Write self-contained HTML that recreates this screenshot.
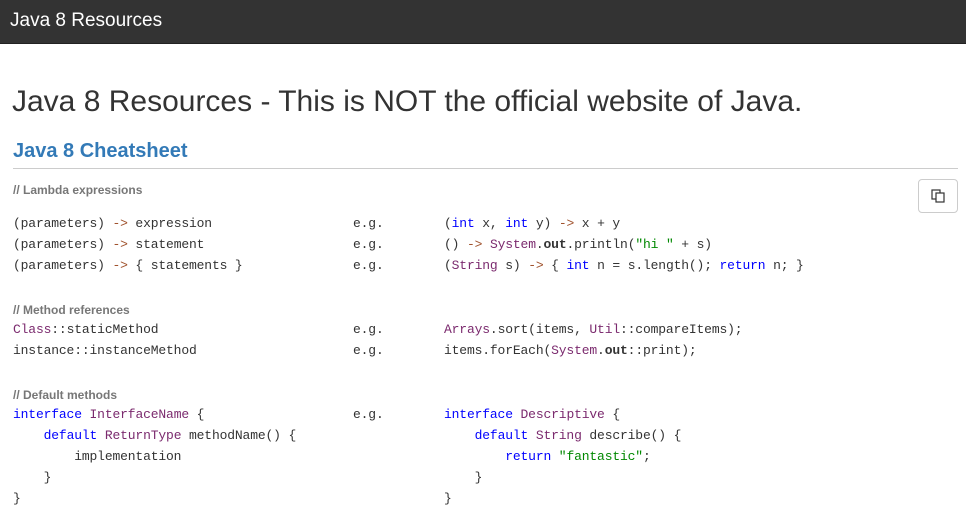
<!DOCTYPE html>
<html><head><meta charset="utf-8"><style>
body{margin:0;background:#fff;font-family:"Liberation Sans",sans-serif;color:#333;width:966px;height:515px;overflow:hidden;position:relative}
.nav{position:absolute;left:0;top:0;width:966px;height:43px;background:#333;border-bottom:1px solid #222}
.nav span{position:absolute;left:10px;top:10px;color:#fff;font-size:19px}
h1{position:absolute;left:12px;top:85px;margin:0;font-size:30px;font-weight:normal;color:#333;white-space:nowrap}
h2{position:absolute;left:13px;top:140px;margin:0;font-size:20px;font-weight:bold;color:#337ab7}
.hr{position:absolute;left:13px;top:168px;width:945px;height:1px;background:#ccc}
.btn{position:absolute;left:918px;top:179px;width:38px;height:32px;border:1px solid #ccc;border-radius:4px;background:#fff}
.c{position:absolute;left:13px;font-size:12px;font-weight:bold;color:#777}
.l{position:absolute;font-family:"Liberation Mono",monospace;font-size:13px;letter-spacing:-0.15px;white-space:pre;color:#333;line-height:16px}
.k{color:#00f}.t{color:#7b2a6e}.o{color:#a0522d}.s{color:#080}.b{font-weight:bold}
</style></head><body>
<div class="nav"><span>Java 8 Resources</span></div>
<h1>Java 8 Resources - This is NOT the official website of Java.</h1>
<h2>Java 8 Cheatsheet</h2>
<div class="hr"></div>
<div class="btn"><svg width="38" height="32" viewBox="0 0 38 32"><rect x="13" y="10" width="8" height="9" fill="none" stroke="#333" stroke-width="1.2"/><rect x="17" y="13" width="8" height="9" fill="#fff" stroke="#333" stroke-width="1.2"/></svg></div>

<div class="c" style="top:183px">// Lambda expressions</div>
<div class="l" style="left:13px;top:216px">(parameters) <span class="o">-&gt;</span> expression</div>
<div class="l" style="left:13px;top:237px">(parameters) <span class="o">-&gt;</span> statement</div>
<div class="l" style="left:13px;top:258px">(parameters) <span class="o">-&gt;</span> { statements }</div>
<div class="l" style="left:353px;top:216px">e.g.</div>
<div class="l" style="left:353px;top:237px">e.g.</div>
<div class="l" style="left:353px;top:258px">e.g.</div>
<div class="l" style="left:444px;top:216px">(<span class="k">int</span> x, <span class="k">int</span> y) <span class="o">-&gt;</span> x + y</div>
<div class="l" style="left:444px;top:237px">() <span class="o">-&gt;</span> <span class="t">System</span>.<span class="b">out</span>.println(<span class="s">"hi "</span> + s)</div>
<div class="l" style="left:444px;top:258px">(<span class="t">String</span> s) <span class="o">-&gt;</span> { <span class="k">int</span> n = s.length(); <span class="k">return</span> n; }</div>

<div class="c" style="top:303px">// Method references</div>
<div class="l" style="left:13px;top:322px"><span class="t">Class</span>::staticMethod</div>
<div class="l" style="left:13px;top:343px">instance::instanceMethod</div>
<div class="l" style="left:353px;top:322px">e.g.</div>
<div class="l" style="left:353px;top:343px">e.g.</div>
<div class="l" style="left:444px;top:322px"><span class="t">Arrays</span>.sort(items, <span class="t">Util</span>::compareItems);</div>
<div class="l" style="left:444px;top:343px">items.forEach(<span class="t">System</span>.<span class="b">out</span>::print);</div>

<div class="c" style="top:388px">// Default methods</div>
<div class="l" style="left:13px;top:407px"><span class="k">interface</span> <span class="t">InterfaceName</span> {</div>
<div class="l" style="left:13px;top:428px">    <span class="k">default</span> <span class="t">ReturnType</span> methodName() {</div>
<div class="l" style="left:13px;top:449px">        implementation</div>
<div class="l" style="left:13px;top:470px">    }</div>
<div class="l" style="left:13px;top:491px">}</div>
<div class="l" style="left:353px;top:407px">e.g.</div>
<div class="l" style="left:444px;top:407px"><span class="k">interface</span> <span class="t">Descriptive</span> {</div>
<div class="l" style="left:444px;top:428px">    <span class="k">default</span> <span class="t">String</span> describe() {</div>
<div class="l" style="left:444px;top:449px">        <span class="k">return</span> <span class="s">"fantastic"</span>;</div>
<div class="l" style="left:444px;top:470px">    }</div>
<div class="l" style="left:444px;top:491px">}</div>
</body></html>
